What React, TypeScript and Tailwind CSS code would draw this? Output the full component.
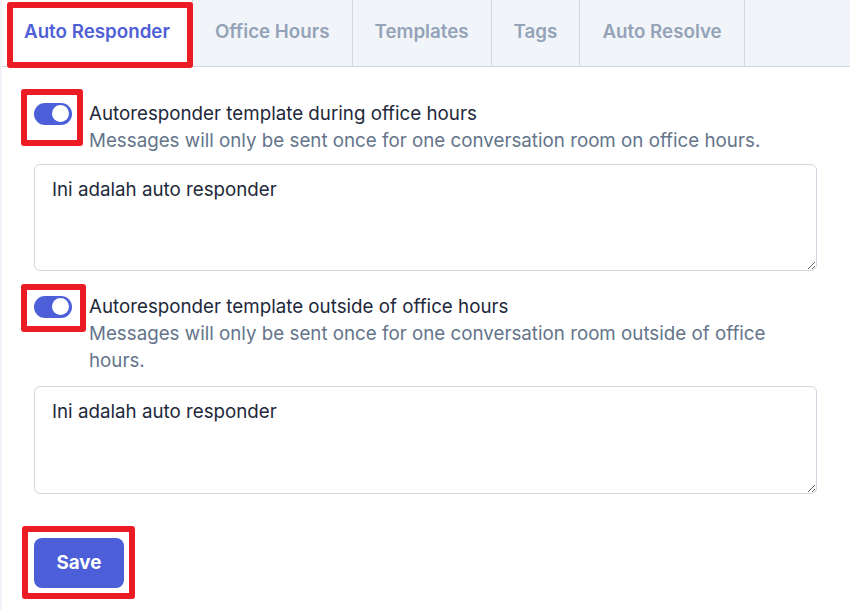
import React from "react";

const tabs = ["Auto Responder", "Office Hours", "Templates", "Tags", "Auto Resolve"];

function Toggle() {
  return (
    <div className="w-[38px] h-[22px] rounded-full bg-[#4c5fd9] flex items-center justify-end pr-[3px]">
      <div className="w-[17px] h-[17px] rounded-full bg-white" />
    </div>
  );
}

export default function App() {
  return (
    <div className="w-[850px] h-[610px] bg-[#f1f5f9] pl-[2px] overflow-hidden font-['Inter','Noto_Sans',sans-serif]">
      <div className="bg-white h-full">
        <div className="flex h-[67px] bg-[#f1f5f9] border-b border-[#cfd8e3]">
          {tabs.map((t, i) => (
            <div
              key={t}
              className={
                i === 0
                  ? "relative h-[66px] flex items-center pb-[2px] px-[22px] bg-white text-[#4f5fd6] text-[18.75px] font-semibold border-r border-[#cfd8e3]"
                  : "relative h-[66px] flex items-center pb-[2px] px-[22px] text-[#94a3b8] text-[18.75px] font-semibold border-r border-[#cfd8e3]"
              }
            >
              {t}
              {i === 0 && (
                <div className="absolute left-[5px] right-[-1px] top-[2px] bottom-[-2px] border-[6px] border-[#ec1c24] rounded-[3px] pointer-events-none" />
              )}
            </div>
          ))}
        </div>

        <div className="pl-[32px] pr-[33px] pt-[33px] flex flex-col">
          <div className="flex items-start gap-[17px]">
            <div className="relative h-[27px] flex items-center shrink-0">
              <Toggle />
              <div className="absolute left-[-13px] right-[-11px] top-[-11px] bottom-[-19px] border-[6px] border-[#ec1c24] rounded-[3px] pointer-events-none" />
            </div>
            <div className="text-[18.75px] leading-[27px]">
              <div className="text-[#1e293b]">Autoresponder template during office hours</div>
              <div className="text-[#64748b]">
                Messages will only be sent once for one conversation room on office hours.
              </div>
            </div>
          </div>
          <textarea
            className="mt-[10px] w-full h-[107px] rounded-[6px] border border-[#d0d7e0] px-[17px] py-[11px] text-[18.75px] leading-[27px] text-[#1e293b] outline-none"
            defaultValue="Ini adalah auto responder"
          />

          <div className="flex items-start gap-[17px] mt-[22px]">
            <div className="relative h-[27px] flex items-center shrink-0">
              <Toggle />
              <div className="absolute left-[-13px] right-[-14px] top-[-9px] bottom-[-12px] border-[6px] border-[#ec1c24] rounded-[3px] pointer-events-none" />
            </div>
            <div className="text-[18.75px] leading-[27px]">
              <div className="text-[#1e293b]">Autoresponder template outside of office hours</div>
              <div className="text-[#64748b]">
                Messages will only be sent once for one conversation room outside of office hours.
              </div>
            </div>
          </div>
          <textarea
            className="mt-[12px] w-full h-[108px] rounded-[6px] border border-[#d0d7e0] px-[17px] py-[11px] text-[18.75px] leading-[27px] text-[#1e293b] outline-none"
            defaultValue="Ini adalah auto responder"
          />

          <div className="mt-[44px]">
            <div className="relative inline-block">
              <button className="w-[90px] h-[50px] rounded-[8px] bg-[#4c5fd9] text-white text-[18.75px] font-bold">
                Save
              </button>
              <div className="absolute left-[-12px] right-[-11px] top-[-12px] bottom-[-11px] border-[6px] border-[#ec1c24] rounded-[3px] pointer-events-none" />
            </div>
          </div>
        </div>
      </div>
    </div>
  );
}
